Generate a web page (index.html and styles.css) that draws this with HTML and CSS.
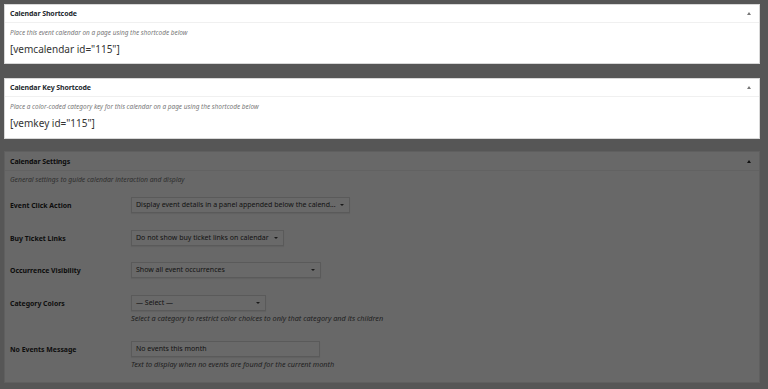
FILE: index.html
```html
<!DOCTYPE html>
<html>
<head>
<meta charset="utf-8">
<link rel="stylesheet" href="styles.css">
</head>
<body>
<div class="page">
  <section class="box box-light box-cal">
    <header class="box-head"><h2>Calendar Shortcode</h2><span class="toggle"></span></header>
    <div class="box-body">
      <p class="desc">Place this event calendar on a page using the shortcode below</p>
      <p class="code">[vemcalendar id="115"]</p>
    </div>
  </section>
  <section class="box box-light box-key">
    <header class="box-head"><h2>Calendar Key Shortcode</h2><span class="toggle"></span></header>
    <div class="box-body">
      <p class="desc">Place a color-coded category key for this calendar on a page using the shortcode below</p>
      <p class="code">[vemkey id="115"]</p>
    </div>
  </section>
  <section class="box box-dim">
    <header class="box-head"><h2>Calendar Settings</h2><span class="toggle"></span></header>
    <div class="box-body">
      <p class="desc">General settings to guide calendar interaction and display</p>
      <div class="row">
        <div class="label">Event Click Action</div>
        <div class="field"><div class="select w-219">Display event details in a panel appended below the calend...<span class="caret"></span></div></div>
      </div>
      <div class="row">
        <div class="label">Buy Ticket Links</div>
        <div class="field"><div class="select w-153">Do not show buy ticket links on calendar<span class="caret"></span></div></div>
      </div>
      <div class="row">
        <div class="label">Occurrence Visibility</div>
        <div class="field"><div class="select w-190">Show all event occurrences<span class="caret"></span></div></div>
      </div>
      <div class="row">
        <div class="label">Category Colors</div>
        <div class="field"><div class="select w-135">— Select —<span class="caret"></span></div>
          <p class="help">Select a category to restrict color choices to only that category and its children</p></div>
      </div>
      <div class="row">
        <div class="label">No Events Message</div>
        <div class="field"><div class="input w-189">No events this month</div>
          <p class="help">Text to display when no events are found for the current month</p></div>
      </div>
    </div>
  </section>
</div>
</body>
</html>
```

FILE: styles.css
```css
* { box-sizing: border-box; }
html, body { margin: 0; padding: 0; }
body {
  width: 768px;
  height: 389px;
  overflow: hidden;
  background: #565656;
  font-family: "Noto Sans", "Open Sans", sans-serif;
}
.page {
  padding: 4px 8px 0 4px;
  display: flex;
  flex-direction: column;
}
.box {
  width: 756px;
  border: 1px solid #d8d8d8;
}
.box-light { background: #fff; }
.box-cal { height: 60px; }
.box-key { height: 61px; margin-top: 14px; }
.box-dim {
  margin-top: 12px;
  height: 232px;
  background: #686868;
  border-color: #5f5f5f;
}
.box-head {
  height: 18px;
  display: flex;
  align-items: center;
  justify-content: space-between;
  padding: 0 8px 0 5px;
  border-bottom: 1px solid #f0f0f0;
}
.box-dim .box-head { border-bottom-color: #626262; height: 19px; }
.box-head h2 {
  margin: 0;
  font-size: 7px;
  font-weight: 700;
  color: #23282d;
  letter-spacing: -0.1px;
}
.box-dim .box-head h2 { color: #0c0c0c; }
.toggle {
  width: 0; height: 0;
  border-left: 2.5px solid transparent;
  border-right: 2.5px solid transparent;
  border-bottom: 3px solid #777;
}
.box-dim .toggle { border-bottom-color: #111; }
.box-body { padding: 4px 5px 0 5px; }
.desc {
  margin: 0;
  font-size: 6.45px;
  font-style: italic;
  color: #777;
  line-height: 12px;
}
.code {
  margin: 1px 0 0;
  font-size: 10px;
  color: #333;
  line-height: 18px;
}
.box-dim .box-body { padding-top: 3px; }
.box-dim .desc { color: #2e2e2e; margin-bottom: 11px; font-size: 6.8px; }
.row {
  display: flex;
  align-items: flex-start;
  padding-bottom: 16.5px;
}
.label {
  width: 121px;
  flex: none;
  font-size: 6.9px;
  font-weight: 700;
  color: #0d0d0d;
  line-height: 16px;
  padding-top: 1px;
  height: 16px;
}
.field { display: flex; flex-direction: column; }
.select, .input {
  height: 16px;
  border: 1px solid #5a5a5a;
  background: #696969;
  font-size: 7px;
  color: #121212;
  line-height: 14px;
  padding: 0 4px;
  position: relative;
  white-space: nowrap;
  box-shadow: 0 1px 1px rgba(0,0,0,0.06);
}
.select { padding-right: 12px; }
.caret {
  position: absolute;
  right: 5px;
  top: 6px;
  width: 0; height: 0;
  border-left: 2px solid transparent;
  border-right: 2px solid transparent;
  border-top: 2.5px solid #1a1a1a;
}
.w-219 { width: 219px; }
.w-153 { width: 153px; }
.w-190 { width: 190px; }
.w-135 { width: 135px; }
.w-189 { width: 189px; }
.help {
  margin: 1px 0 0;
  font-size: 7.3px;
  font-style: italic;
  color: #1e1e1e;
  line-height: 13px;
  white-space: nowrap;
}
```
